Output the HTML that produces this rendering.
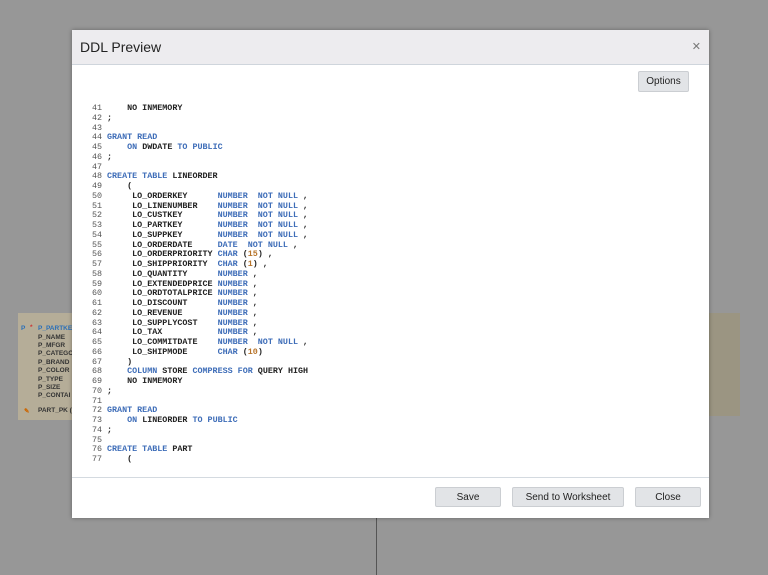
<!DOCTYPE html>
<html><head><meta charset="utf-8"><style>
body{margin:0;width:768px;height:575px;background:#979797;position:relative;overflow:hidden;font-family:"Liberation Sans",sans-serif}
.lp{position:absolute;left:18px;top:313px;width:60px;height:107px;background:#b5ad98}
.lp div{position:absolute;font-size:6.5px;color:#333;font-weight:bold;left:20px}
.rp{position:absolute;left:700px;top:313px;width:40px;height:103px;background:#9b9582}
.vl{position:absolute;left:376px;top:518px;width:1px;height:57px;background:#555}
.dlg{position:absolute;left:72px;top:30px;width:637px;height:488px;background:#fff;box-shadow:0 0 4px rgba(0,0,0,.35)}
.tb{height:34px;background:#edecef;border-bottom:1px solid #cfd5dc;position:relative}
.tb .t{position:absolute;left:8px;top:9px;font-size:14px;color:#222}
.tb .x{position:absolute;right:8px;top:10px;font-size:11px;color:#777}
.btn{position:absolute;background:#e2e4e7;border:1px solid #cbced2;border-radius:2px;font-size:10px;color:#222;display:flex;align-items:center;justify-content:center;box-sizing:border-box}
pre{position:absolute;left:0;top:74px;margin:0;font-family:"Liberation Mono",monospace;font-size:8.4px;line-height:9.75px;font-weight:bold;color:#222}
.n{color:#555;font-weight:normal;display:inline-block;width:30px;text-align:right;margin-right:5px}
.k{color:#3e6db8}.o{color:#b7742a}
.ft{position:absolute;left:0;top:447px;width:637px;border-top:1px solid #d4dae0}
</style></head><body>
<div class="lp">
<div style="left:3px;top:12px;color:#2a6fb8">P</div><div style="left:12px;top:11px;color:#c33">*</div>
<div style="top:12px;color:#2a6fb8">P_PARTKE</div>
<div style="top:21px">P_NAME</div><div style="top:29px">P_MFGR</div><div style="top:37px">P_CATEGO</div><div style="top:46px">P_BRAND</div><div style="top:54px">P_COLOR</div><div style="top:63px">P_TYPE</div><div style="top:71px">P_SIZE</div><div style="top:79px">P_CONTAI</div>
<div style="left:6px;top:94px;color:#c60">✎</div><div style="top:94px">PART_PK (</div>
</div>
<div class="rp"></div>
<div class="vl"></div>
<div class="dlg">
<div class="tb"><span class="t">DDL Preview</span><span class="x">✕</span></div>
<div class="btn" style="left:566px;top:41px;width:51px;height:21px">Options</div>
<pre><span class="n">41</span>    NO INMEMORY
<span class="n">42</span>;
<span class="n">43</span>
<span class="n">44</span><span class="k">GRANT READ</span>
<span class="n">45</span>    <span class="k">ON</span> DWDATE <span class="k">TO PUBLIC</span>
<span class="n">46</span>;
<span class="n">47</span>
<span class="n">48</span><span class="k">CREATE TABLE</span> LINEORDER
<span class="n">49</span>    (
<span class="n">50</span>     LO_ORDERKEY      <span class="k">NUMBER  NOT NULL</span> ,
<span class="n">51</span>     LO_LINENUMBER    <span class="k">NUMBER  NOT NULL</span> ,
<span class="n">52</span>     LO_CUSTKEY       <span class="k">NUMBER  NOT NULL</span> ,
<span class="n">53</span>     LO_PARTKEY       <span class="k">NUMBER  NOT NULL</span> ,
<span class="n">54</span>     LO_SUPPKEY       <span class="k">NUMBER  NOT NULL</span> ,
<span class="n">55</span>     LO_ORDERDATE     <span class="k">DATE  NOT NULL</span> ,
<span class="n">56</span>     LO_ORDERPRIORITY <span class="k">CHAR</span> (<span class="o">15</span>) ,
<span class="n">57</span>     LO_SHIPPRIORITY  <span class="k">CHAR</span> (<span class="o">1</span>) ,
<span class="n">58</span>     LO_QUANTITY      <span class="k">NUMBER</span> ,
<span class="n">59</span>     LO_EXTENDEDPRICE <span class="k">NUMBER</span> ,
<span class="n">60</span>     LO_ORDTOTALPRICE <span class="k">NUMBER</span> ,
<span class="n">61</span>     LO_DISCOUNT      <span class="k">NUMBER</span> ,
<span class="n">62</span>     LO_REVENUE       <span class="k">NUMBER</span> ,
<span class="n">63</span>     LO_SUPPLYCOST    <span class="k">NUMBER</span> ,
<span class="n">64</span>     LO_TAX           <span class="k">NUMBER</span> ,
<span class="n">65</span>     LO_COMMITDATE    <span class="k">NUMBER  NOT NULL</span> ,
<span class="n">66</span>     LO_SHIPMODE      <span class="k">CHAR</span> (<span class="o">10</span>)
<span class="n">67</span>    )
<span class="n">68</span>    <span class="k">COLUMN</span> STORE <span class="k">COMPRESS FOR</span> QUERY HIGH
<span class="n">69</span>    NO INMEMORY
<span class="n">70</span>;
<span class="n">71</span>
<span class="n">72</span><span class="k">GRANT READ</span>
<span class="n">73</span>    <span class="k">ON</span> LINEORDER <span class="k">TO PUBLIC</span>
<span class="n">74</span>;
<span class="n">75</span>
<span class="n">76</span><span class="k">CREATE TABLE</span> PART
<span class="n">77</span>    (</pre>
<div class="ft"></div>
<div class="btn" style="left:363px;top:457px;width:66px;height:20px">Save</div>
<div class="btn" style="left:440px;top:457px;width:112px;height:20px">Send to Worksheet</div>
<div class="btn" style="left:563px;top:457px;width:66px;height:20px">Close</div>
</div>
</body></html>
